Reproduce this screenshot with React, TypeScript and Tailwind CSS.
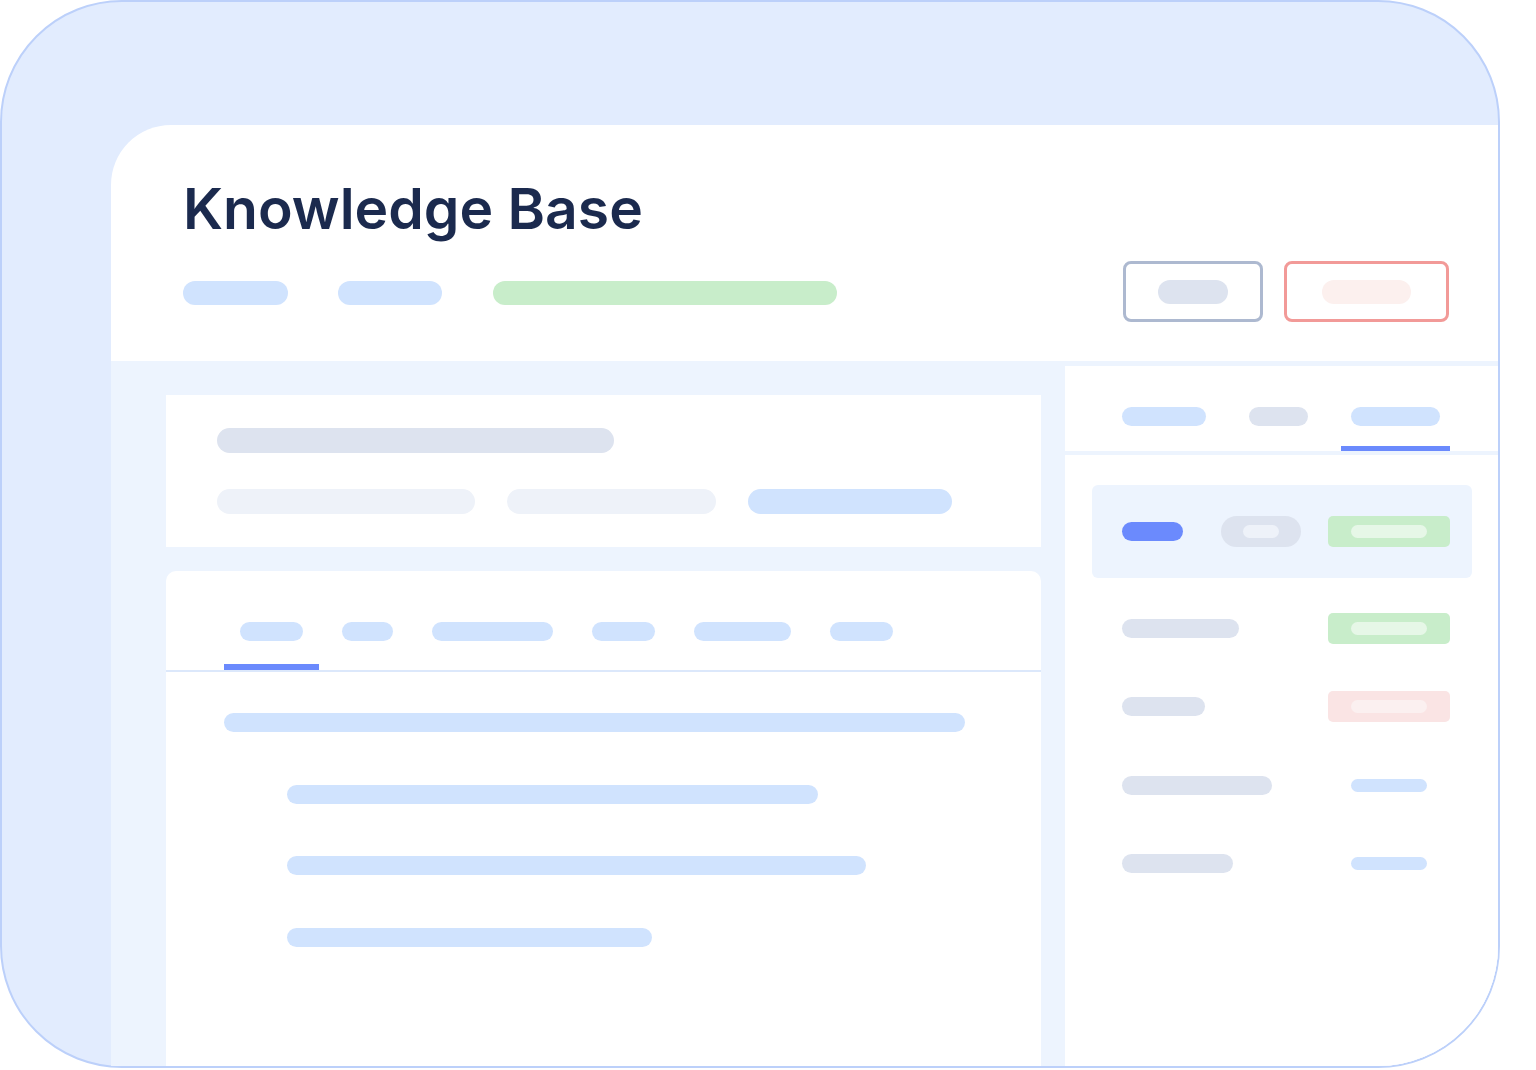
const Bar = ({ w, h = 19, color = 'bg-[#d0e3fe]' }: { w: number; h?: number; color?: string }) => (
  <div className={`${color} rounded-full shrink-0`} style={{ width: w, height: h }} />
);

const tabs = [63, 51, 121, 63, 97, 63];
const lines = [
  { w: 741, indent: 0 },
  { w: 531, indent: 63 },
  { w: 579, indent: 63 },
  { w: 365, indent: 63 },
];

const rows = [
  { left: 117, kind: 'green' },
  { left: 83, kind: 'red' },
  { left: 150, kind: 'blue' },
  { left: 111, kind: 'blue' },
];

const StatusBox = ({ kind }: { kind: string }) => {
  if (kind === 'green') {
    return (
      <div className="w-[122px] h-[31px] rounded-[5px] bg-[#c8edca] flex items-center justify-center">
        <div className="w-[76px] h-[13px] rounded-full bg-[#e6f7e7]" />
      </div>
    );
  }
  if (kind === 'red') {
    return (
      <div className="w-[122px] h-[31px] rounded-[5px] bg-[#fae4e4] flex items-center justify-center">
        <div className="w-[76px] h-[13px] rounded-full bg-[#fbf0f0]" />
      </div>
    );
  }
  return (
    <div className="w-[122px] h-[31px] flex items-center justify-center">
      <div className="w-[76px] h-[13px] rounded-full bg-[#d0e3fe]" />
    </div>
  );
};

export default function App() {
  return (
    <div className="w-[1536px] h-[1070px] bg-white" style={{ fontFamily: 'Inter, "Noto Sans", sans-serif' }}>
      <div className="w-[1500px] h-[1068px] rounded-[122px] border-2 border-[#bcd0fa] bg-[#e2ecfe] overflow-hidden flex flex-col pt-[123px] pl-[109px]">
        <div className="flex-1 flex flex-col bg-white rounded-tl-[60px] overflow-hidden">
          {/* Header */}
          <header className="h-[236px] shrink-0 pl-[72px] pr-[49px] pt-[55px]">
            <h1 className="text-[57px] leading-[57px] font-semibold text-[#1b2a4e]">Knowledge Base</h1>
            <div className="mt-[24px] flex items-center justify-between">
              <div className="flex items-center pt-[3px]">
                <Bar w={105} h={24} />
                <div className="ml-[50px]"><Bar w={104} h={24} /></div>
                <div className="ml-[51px]"><Bar w={344} h={24} color="bg-[#c8edca]" /></div>
              </div>
              <div className="flex items-center gap-[21px]">
                <div className="w-[140px] h-[61px] rounded-[8px] border-[3px] border-[#adb9d0] flex items-center justify-center">
                  <Bar w={70} h={24} color="bg-[#dde3ef]" />
                </div>
                <div className="w-[165px] h-[61px] rounded-[8px] border-[3px] border-[#f29a98] flex items-center justify-center">
                  <Bar w={89} h={24} color="bg-[#fcf0ee]" />
                </div>
              </div>
            </div>
          </header>

          {/* Body */}
          <div className="flex-1 flex bg-[#edf4fe]">
            <div className="w-[954px] shrink-0 pl-[55px] pr-[24px] pt-[34px] flex flex-col">
              <section className="h-[152px] bg-white pl-[51px] pt-[33px]">
                <Bar w={397} h={25} color="bg-[#dde3ef]" />
                <div className="mt-[36px] flex items-center">
                  <Bar w={258} h={25} color="bg-[#eef2f9]" />
                  <div className="ml-[32px]"><Bar w={209} h={25} color="bg-[#eef2f9]" /></div>
                  <div className="ml-[32px]"><Bar w={204} h={25} /></div>
                </div>
              </section>

              <section className="mt-[24px] flex-1 bg-white rounded-t-[10px]">
                <div className="pt-[51px] pl-[58px] flex gap-[7px]">
                  {tabs.map((w, i) => (
                    <div key={i} className="px-4 flex flex-col">
                      <Bar w={w} />
                      <div className={`mt-[23px] h-[6px] -mx-4 ${i === 0 ? 'bg-[#6b8afd]' : 'bg-transparent'}`} />
                    </div>
                  ))}
                </div>
                <div className="h-[2px] bg-[#dce8fb]" />
                <div className="pl-[58px] pt-[41px] flex flex-col gap-[52.5px]">
                  {lines.map((l, i) => (
                    <div key={i} style={{ paddingLeft: l.indent }}>
                      <Bar w={l.w} />
                    </div>
                  ))}
                </div>
              </section>
            </div>

            {/* Right panel */}
            <aside className="flex-1 mt-[5px] bg-white">
              <div className="pt-[41px] pl-[57px] flex items-start">
                <Bar w={84} />
                <div className="ml-[43px]"><Bar w={59} color="bg-[#dde3ef]" /></div>
                <div className="ml-[33px] px-[10px] flex flex-col">
                  <Bar w={89} />
                  <div className="mt-[20px] -mx-[10px] h-[5px] bg-[#6b8afd]" />
                </div>
              </div>
              <div className="h-[4px] bg-[#edf4fe]" />

              <div className="mt-[30px] ml-[27px] w-[380px] h-[93px] rounded-[6px] bg-[#edf4fe] flex items-center pl-[30px]">
                <Bar w={61} color="bg-[#6b8afd]" />
                <div className="ml-[38px] w-[80px] h-[31px] rounded-full bg-[#dde3ef] flex items-center justify-center">
                  <div className="w-[36px] h-[13px] rounded-full bg-[#eef2f9]" />
                </div>
                <div className="ml-[27px]"><StatusBox kind="green" /></div>
              </div>

              <div className="mt-[11px] pl-[57px] pr-[48px]">
                {rows.map((r, i) => (
                  <div key={i} className="h-[78.5px] flex items-center justify-between">
                    <Bar w={r.left} color="bg-[#dde3ef]" />
                    <StatusBox kind={r.kind} />
                  </div>
                ))}
              </div>
            </aside>
          </div>
        </div>
      </div>
    </div>
  );
}
